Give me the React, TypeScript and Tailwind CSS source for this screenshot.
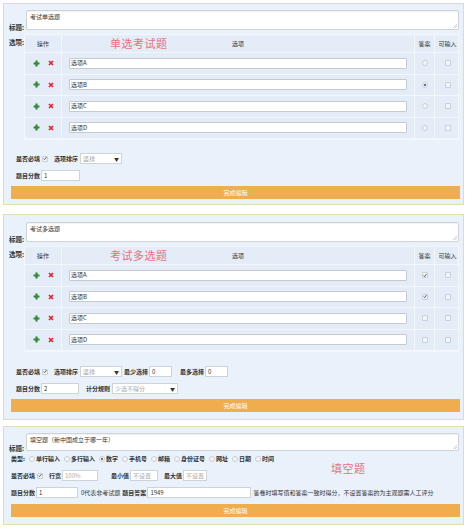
import React from "react";

const font = "font-['Noto_Sans_CJK_SC','Noto_Sans',sans-serif]";

const PlusIcon = () => (
  <svg width="7" height="7" viewBox="0 0 7 7">
    <path d="M3.5 0.5v6M0.5 3.5h6" stroke="#2f8a34" strokeWidth="2.2" />
  </svg>
);

const XIcon = () => (
  <svg width="6" height="6" viewBox="0 0 6 6">
    <path d="M1 1l4 4M5 1l-4 4" stroke="#e3262d" strokeWidth="1.7" />
  </svg>
);

const Radio = ({ on = false }: { on?: boolean }) => (
  <span className="inline-flex h-[6px] w-[6px] shrink-0 items-center justify-center rounded-full border border-[#c9ced6] bg-[#f3f5f8]">
    {on && <span className="h-[2px] w-[2px] rounded-full bg-[#444]" />}
  </span>
);

const Check = ({ on = false }: { on?: boolean }) => (
  <span className="inline-flex h-[6px] w-[6px] shrink-0 items-center justify-center rounded-[1px] border border-[#c9ced6] bg-[#f3f5f8]">
    {on && (
      <svg width="5" height="5" viewBox="0 0 5 5">
        <path d="M0.8 2.6l1.2 1.2 2.3-3" stroke="#333" strokeWidth="1" fill="none" />
      </svg>
    )}
  </span>
);

const Box = ({
  w,
  value,
  gray = false,
  arrow = false,
}: {
  w: string;
  value: string;
  gray?: boolean;
  arrow?: boolean;
}) => (
  <span
    className={`${w} inline-flex h-[11px] shrink-0 items-center justify-between border border-[#cfd3d8] bg-white px-[2px] text-[6px] leading-none ${
      gray ? "text-[#aaa]" : "text-[#333]"
    }`}
  >
    <span>{value}</span>
    {arrow && <span className="text-[5px] text-[#333]">▼</span>}
  </span>
);

const Title = ({ text, h }: { text: string; h: string }) => (
  <div className="flex items-end">
    <div className="w-[22px] whitespace-nowrap pl-[5px] text-[6.5px] font-bold text-[#333]">标题:</div>
    <div className={`relative ${h} w-[433px] rounded-[2px] border border-[#cfd3d8] bg-white px-[3px] pt-[3px] text-[6px] text-[#333] shadow-[inset_0_1px_1px_rgba(0,0,0,0.06)]`}>
      {text}
      <svg className="absolute bottom-[1px] right-[1px]" width="4" height="4" viewBox="0 0 4 4">
        <path d="M4 0L0 4M4 2L2 4" stroke="#aaa" strokeWidth="0.6" />
      </svg>
    </div>
  </div>
);

const OptionTable = ({ tag, multi }: { tag: string; multi: boolean }) => {
  const rows = ["选项A", "选项B", "选项C", "选项D"];
  return (
    <div className="mt-[4px] flex items-start">
      <div className="w-[20px] whitespace-nowrap pl-[5px] pt-[5px] text-[6.5px] font-bold text-[#333]">选项:</div>
      <div className="grid w-[435px] grid-cols-[37px_353px_20px_25px] border border-[#f3f7fc] bg-[#e3ecf7] text-[6px] text-[#333]">
        <div className="flex h-[18px] items-center justify-center border-r border-b border-[#f3f7fc]">操作</div>
        <div className="relative flex h-[18px] items-center justify-center border-r border-b border-[#f3f7fc]">
          选项
          <span className="absolute left-[48px] top-[3px] text-[11px] leading-none tracking-[0.5px] text-[#e8717b]">{tag}</span>
        </div>
        <div className="flex h-[18px] items-center justify-center border-r border-b border-[#f3f7fc]">答案</div>
        <div className="flex h-[18px] items-center justify-center border-b border-[#f3f7fc]">可输入</div>
        {rows.map((r, i) => (
          <React.Fragment key={r}>
            <div className="flex h-[21.5px] items-center justify-center gap-[8px] border-r border-b border-[#f3f7fc]">
              <PlusIcon />
              <XIcon />
            </div>
            <div className="flex h-[21.5px] items-center border-r border-b border-[#f3f7fc] pl-[7px]">
              <div className="flex h-[11px] w-[338px] items-center rounded-[1px] border border-[#c5cad1] bg-white px-[1px] text-[6px]">
                {r}
              </div>
            </div>
            <div className="flex h-[21.5px] items-center justify-center border-r border-b border-[#f3f7fc]">
              {multi ? <Check on={i < 2} /> : <Radio on={i === 1} />}
            </div>
            <div className="flex h-[21.5px] items-center justify-center border-b border-[#f3f7fc]">
              <Check />
            </div>
          </React.Fragment>
        ))}
      </div>
    </div>
  );
};

const Label = ({ children, cls = "" }: { children: React.ReactNode; cls?: string }) => (
  <span className={`shrink-0 whitespace-nowrap text-[6px] font-bold leading-none text-[#333] ${cls}`}>{children}</span>
);

const DoneBar = ({ mt }: { mt: string }) => (
  <div className={`${mt} ml-[7px] flex h-[13px] w-[449px] items-center justify-center bg-[#f0ad4e] text-[6px] text-white`}>
    完成编辑
  </div>
);

const types: [string, boolean][] = [
  ["单行输入", false],
  ["多行输入", false],
  ["数字", true],
  ["手机号", false],
  ["邮箱", false],
  ["身份证号", false],
  ["网址", false],
  ["日期", false],
  ["时间", false],
];

export default function App() {
  return (
    <div className={`min-h-screen bg-white text-[6px] leading-none ${font}`}>
      {/* 单选 */}
      <div className="ml-[3px] mt-[3px] w-[461px] border border-[#e2ddb4] bg-[#e9f1fa] pt-[6px] pb-[5px]">
        <Title text="考试单选题" h="h-[20px]" />
        <OptionTable tag="单选考试题" multi={false} />
        <div className="ml-[12px] mt-[13px] flex items-center">
          <Label>是否必填</Label>
          <span className="ml-[2px] flex"><Check on /></span>
          <Label cls="ml-[6px]">选项排序</Label>
          <span className="ml-[2px] flex"><Box w="w-[42px]" value="竖排" gray arrow /></span>
        </div>
        <div className="ml-[12px] mt-[6px] flex items-center">
          <Label>题目分数</Label>
          <span className="ml-[1px] flex"><Box w="w-[39px]" value="1" /></span>
        </div>
        <DoneBar mt="mt-[5px]" />
      </div>

      {/* 多选 */}
      <div className="ml-[3px] mt-[9px] w-[461px] border border-[#e2ddb4] bg-[#e9f1fa] pt-[7px] pb-[7px]">
        <Title text="考试多选题" h="h-[20px]" />
        <OptionTable tag="考试多选题" multi />
        <div className="ml-[12px] mt-[14px] flex items-center">
          <Label>是否必填</Label>
          <span className="ml-[2px] flex"><Check on /></span>
          <Label cls="ml-[6px]">选项排序</Label>
          <span className="ml-[2px] flex"><Box w="w-[42px]" value="竖排" gray arrow /></span>
          <Label cls="ml-[2px]">最少选择</Label>
          <span className="ml-[1px] flex"><Box w="w-[23px]" value="0" /></span>
          <Label cls="ml-[8px]">最多选择</Label>
          <span className="ml-[1px] flex"><Box w="w-[23px]" value="0" /></span>
        </div>
        <div className="ml-[12px] mt-[6px] flex items-center">
          <Label>题目分数</Label>
          <span className="ml-[1px] flex"><Box w="w-[38px]" value="2" /></span>
          <Label cls="ml-[7px]">计分规则</Label>
          <span className="ml-[2px] flex"><Box w="w-[66px]" value="少选不得分" gray arrow /></span>
        </div>
        <DoneBar mt="mt-[5px]" />
      </div>

      {/* 填空 */}
      <div className="relative ml-[3px] mt-[6px] w-[461px] border border-[#e2ddb4] bg-[#e9f1fa] pt-[6px] pb-[7px]">
        <Title text="填空题（新中国成立于哪一年）" h="h-[18px]" />
        <span className="absolute left-[327px] top-[36px] text-[11px] leading-none tracking-[0.5px] text-[#e8717b]">填空题</span>
        <div className="ml-[7px] mt-[5px] flex items-center gap-[4px]">
          <Label>类型:</Label>
          {types.map(([t, on]) => (
            <span key={t} className="flex items-center gap-[1px]">
              <Radio on={on} />
              <Label>{t}</Label>
            </span>
          ))}
        </div>
        <div className="ml-[7px] mt-[8px] flex items-center">
          <Label>是否必填</Label>
          <span className="ml-[2px] flex"><Check on /></span>
          <Label cls="ml-[6px]">行宽</Label>
          <span className="ml-[1px] flex"><Box w="w-[36px]" value="100%" gray /></span>
          <Label cls="ml-[13px]">最小值</Label>
          <span className="ml-[1px] flex"><Box w="w-[28px]" value="不设置" gray /></span>
          <Label cls="ml-[6px]">最大值</Label>
          <span className="ml-[1px] flex"><Box w="w-[24px]" value="不设置" gray /></span>
        </div>
        <div className="ml-[7px] mt-[6px] flex items-center">
          <Label>题目分数</Label>
          <span className="ml-[1px] flex"><Box w="w-[42px]" value="1" /></span>
          <span className="ml-[3px] shrink-0 whitespace-nowrap text-[6px] text-[#333]">0代表非考试题</span>
          <Label cls="ml-[2px]">题目答案</Label>
          <span className="ml-[1px] flex"><Box w="w-[104px]" value="1949" /></span>
          <span className="ml-[2px] whitespace-nowrap text-[6px] text-[#333]">
            答卷时填写值和答案一致时得分，不设置答案的为主观题需人工评分
          </span>
        </div>
        <DoneBar mt="mt-[6px]" />
      </div>
    </div>
  );
}
